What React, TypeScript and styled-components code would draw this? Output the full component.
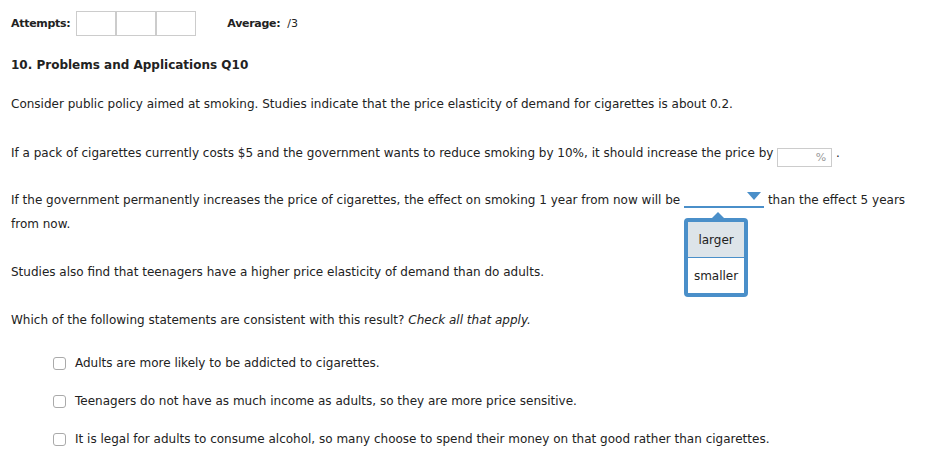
import React from "react"
import styled, { createGlobalStyle } from "styled-components"

const GlobalStyle = createGlobalStyle`
  body {
    margin: 0;
    background: #fff;
    font-family: Verdana, "DejaVu Sans", sans-serif;
    font-size: 12px;
    color: #222;
  }
`

const blue = "#4a8fc9"

export default function App() {
  return (
    <>
      <GlobalStyle />
      <Page>
        <TopBar>
          <Label>Attempts:</Label>
          <Attempts>
            <AttemptBox />
            <AttemptBox />
            <AttemptBox />
          </Attempts>
          <Average>
            <Label>Average:</Label>
            <Score>/3</Score>
          </Average>
        </TopBar>
        <Heading>10. Problems and Applications Q10</Heading>
        <Para gap={19}>
          Consider public policy aimed at smoking. Studies indicate that the price elasticity of demand for
          cigarettes is about 0.2.
        </Para>
        <Para gap={25}>
          If a pack of cigarettes currently costs $5 and the government wants to reduce smoking by 10%, it
          should increase the price by <PercentInput>%</PercentInput> .
        </Para>
        <Para gap={21}>
          If the government permanently increases the price of cigarettes, the effect on smoking 1 year from
          now will be{" "}
          <Select>
            <Caret />
            <Menu>
              <Option selected>larger</Option>
              <Option>smaller</Option>
            </Menu>
          </Select>{" "}
          than the effect 5 years from now.
        </Para>
        <Para gap={24}>Studies also find that teenagers have a higher price elasticity of demand than do adults.</Para>
        <Para gap={24}>
          Which of the following statements are consistent with this result? <em>Check all that apply.</em>
        </Para>
        <Choices>
          <Choice>
            <Box />
            Adults are more likely to be addicted to cigarettes.
          </Choice>
          <Choice>
            <Box />
            Teenagers do not have as much income as adults, so they are more price sensitive.
          </Choice>
          <Choice>
            <Box />
            It is legal for adults to consume alcohol, so many choose to spend their money on that good rather
            than cigarettes.
          </Choice>
        </Choices>
      </Page>
    </>
  )
}

const Page = styled.div`
  padding: 11px 11px 0 11px;
  width: 924px;
`
const TopBar = styled.div`
  display: flex;
  align-items: center;
  height: 25px;
  font-size: 11px;
`
const Label = styled.span`
  font-weight: bold;
  letter-spacing: -0.3px;
`
const Score = styled.span`
  margin-left: 7px;
`
const Attempts = styled.div`
  display: flex;
  margin-left: 6px;
`
const AttemptBox = styled.div`
  width: 38px;
  height: 23px;
  border: 1px solid #ccc;
`
const Average = styled.div`
  margin-left: 31px;
`
const Heading = styled.h2`
  margin: 21px 0 0 0;
  font-size: 12px;
  font-weight: bold;
  line-height: 16px;
`
const Para = styled.p<{ gap: number }>`
  margin: ${(p) => p.gap}px 0 0 0;
  line-height: 24px;
`
const PercentInput = styled.span`
  display: inline-block;
  box-sizing: border-box;
  width: 55px;
  height: 19px;
  border: 1px solid #ccc;
  color: #999;
  font-size: 11px;
  line-height: 17px;
  text-align: right;
  padding-right: 5px;
  vertical-align: -4px;
`
const Select = styled.span`
  position: relative;
  display: inline-block;
  width: 80px;
  height: 18px;
  border-bottom: 2px solid ${blue};
  vertical-align: -4px;
`
const Caret = styled.span`
  position: absolute;
  right: 3px;
  top: 4px;
  width: 0;
  height: 0;
  border-left: 7px solid transparent;
  border-right: 7px solid transparent;
  border-top: 8px solid ${blue};
`
const Menu = styled.div`
  position: absolute;
  left: 0;
  top: 30px;
  width: 64px;
  box-sizing: border-box;
  border: 4px solid ${blue};
  border-radius: 4px;
  background: #fff;
  line-height: 20px;
  &::before {
    content: "";
    position: absolute;
    left: 24px;
    top: -10px;
    border-left: 6px solid transparent;
    border-right: 6px solid transparent;
    border-bottom: 6px solid ${blue};
  }
`
const Option = styled.div<{ selected?: boolean }>`
  height: 35px;
  display: flex;
  align-items: center;
  justify-content: center;
  background: ${(p) => (p.selected ? "#dde4e9" : "#fff")};
  & + & {
    border-top: 1px solid ${blue};
  }
`
const Choices = styled.div`
  margin-top: 19px;
  padding-left: 42px;
  display: flex;
  flex-direction: column;
  gap: 14px;
`
const Choice = styled.label`
  display: flex;
  align-items: center;
  line-height: 24px;
  gap: 9px;
`
const Box = styled.span`
  width: 11px;
  height: 11px;
  border: 1px solid #aaa;
  border-radius: 3px;
  background: #fff;
`
